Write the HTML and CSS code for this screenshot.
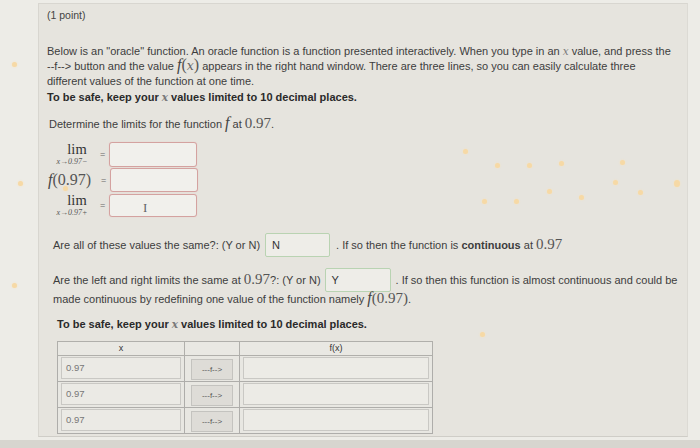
FILE: index.html
```html
<!DOCTYPE html>
<html>
<head>
<meta charset="utf-8">
<link rel="stylesheet" href="styles.css">
</head>
<body>
<div class="page">
  <div class="panel">
    <div class="points">(1 point)</div>
    <p class="intro">Below is an "oracle" function. An oracle function is a function presented interactively. When you type in an <span class="mv">x</span> value, and press the<br>--f--&gt; button and the value <span class="mf">f</span><span class="mp">(</span><span class="mv2">x</span><span class="mp">)</span> appears in the right hand window. There are three lines, so you can easily calculate three<br>different values of the function at one time.<br><b>To be safe, keep your <span class="mv">x</span> values limited to 10 decimal places.</b></p>
    <p class="det">Determine the limits for the function <span class="mf">f</span> at <span class="mn">0.97</span>.</p>
    <div class="lims">
      <div class="limrow">
        <div class="limlbl"><span class="lim">lim</span><span class="sub">x→0.97−</span></div>
        <span class="eq">=</span>
        <div class="ans"></div>
      </div>
      <div class="limrow mid">
        <div class="flbl"><span class="mf">f</span><span class="mn">(0.97)</span></div>
        <span class="eq">=</span>
        <div class="ans a2"></div>
      </div>
      <div class="limrow">
        <div class="limlbl"><span class="lim">lim</span><span class="sub">x→0.97+</span></div>
        <span class="eq">=</span>
        <div class="ans a3"><span class="cursor">I</span></div>
      </div>
    </div>
    <div class="q1"><span>Are all of these values the same?: (Y or N)</span><span class="yn">N</span><span class="after">. If so then the function is <b>continuous</b> at <span class="mn">0.97</span></span></div>
    <div class="q2"><div class="q2line"><span>Are the left and right limits the same at <span class="mn">0.97</span>?: (Y or N)</span><span class="yn yn2">Y</span><span class="after2">. If so then this function is almost continuous and could be</span></div><div class="q2b">made continuous by redefining one value of the function namely <span class="mf">f</span><span class="mn">(0.97)</span>.</div></div>
    <p class="safe"><b>To be safe, keep your <span class="mv">x</span> values limited to 10 decimal places.</b></p>
    <table class="oracle">
      <tr class="hd"><th class="c1">x</th><th class="c2"></th><th class="c3">f(x)</th></tr>
      <tr><td><div class="xin">0.97</div></td><td><div class="btn">---f--&gt;</div></td><td><div class="fout"></div></td></tr>
      <tr><td><div class="xin">0.97</div></td><td><div class="btn">---f--&gt;</div></td><td><div class="fout"></div></td></tr>
      <tr><td><div class="xin">0.97</div></td><td><div class="btn">---f--&gt;</div></td><td><div class="fout"></div></td></tr>
    </table>
    <span class="dot" style="left:-27px;top:58px"></span>
    <span class="dot" style="left:-21px;top:177px"></span>
    <span class="dot" style="left:-27px;top:279px"></span>
    <span class="dot" style="left:24px;top:182px"></span>
    <span class="dot" style="left:424px;top:145px"></span>
    <span class="dot" style="left:456px;top:159px"></span>
    <span class="dot" style="left:488px;top:159px"></span>
    <span class="dot" style="left:520px;top:157px"></span>
    <span class="dot" style="left:581px;top:156px"></span>
    <span class="dot" style="left:443px;top:195px"></span>
    <span class="dot" style="left:475px;top:195px"></span>
    <span class="dot" style="left:508px;top:185px"></span>
    <span class="dot" style="left:540px;top:191px"></span>
    <span class="dot" style="left:574px;top:176px"></span>
    <span class="dot" style="left:599px;top:186px"></span>
    <span class="dot big" style="left:635px;top:176px"></span>
    <span class="dot" style="left:441px;top:328px"></span>
  </div>
</div>
</body>
</html>
```
FILE: styles.css
```css
html, body {
  margin: 0;
  padding: 0;
}
body {
  width: 700px;
  height: 448px;
  overflow: hidden;
  background: #d7d5cf;
  font-family: "Liberation Sans", Arial, sans-serif;
  color: #3d3d3d;
  font-size: 11px;
}
.page {
  height: 440px;
  background: #edece7;
  padding-top: 3px;
  box-sizing: border-box;
}
.panel {
  position: relative;
  margin-left: 38px;
  width: 650px;
  height: 434px;
  box-sizing: border-box;
  background: #e6e4de;
  border-left: 1px solid #d8d6d0;
  border-top: 1px solid #d8d6d0;
  border-bottom: 1px solid #cfcdc7;
  border-right: 1px solid #dcdad4;
  padding: 0 0 0 8px;
}
.points {
  padding-top: 4px;
  line-height: 14px;
  font-size: 10.5px;
  color: #444;
}
p { margin: 0; }
.intro {
  margin-top: 22px;
  line-height: 15.2px;
  white-space: nowrap;
}
.intro .mf, .intro .mp, .intro .mv2, .intro .mv { line-height: 0; }
.intro b, .safe b { color: #2a2a2a; }
.mv {
  font-family: "DejaVu Serif", serif;
  font-style: italic;
  font-size: 10.5px;
  color: #7a7a7a;
  line-height: 1;
}
.mf {
  font-family: "Liberation Serif", serif;
  font-style: italic;
  font-size: 16px;
  color: #444;
  line-height: 1;
}
.mp {
  font-family: "Liberation Serif", serif;
  font-size: 16px;
  color: #555;
  line-height: 1;
}
.mv2 {
  font-family: "DejaVu Serif", serif;
  font-style: italic;
  font-size: 12.5px;
  color: #666;
  line-height: 1;
}
.mn {
  font-family: "Liberation Serif", serif;
  font-size: 15px;
  color: #555;
  line-height: 1;
}
.det {
  margin-top: 10px;
  margin-left: 2px;
  line-height: 16px;
}
.lims {
  margin-top: 10px;
  margin-left: 0;
  display: flex;
  flex-direction: column;
  gap: 1px;
}
.limrow {
  display: flex;
  align-items: center;
  height: 25px;
}
.limrow.mid { height: 24px; }
.limlbl {
  width: 52px;
  display: flex;
  flex-direction: column;
  align-items: center;
}
.lim {
  font-family: "Liberation Serif", serif;
  font-size: 14.5px;
  color: #333;
  line-height: 16px;
  margin-left: 8px;
}
.sub {
  font-family: "Liberation Serif", serif;
  font-style: italic;
  font-size: 8px;
  color: #555;
  line-height: 10px;
  margin-left: -2px;
}
.flbl {
  width: 52px;
  display: flex;
  align-items: baseline;
  margin-left: 1px;
}
.flbl .mn { font-size: 16px; }
.eq {
  font-size: 9px;
  color: #666;
  width: 9px;
  margin-left: 1px;
}
.ans {
  width: 86px;
  height: 23px;
  border: 1px solid #d4a2a0;
  border-radius: 3px;
  background: #f1f0ec;
  box-shadow: 0 0 1px #e4bcba;
  position: relative;
}
.a2 { height: 22px; }
.a3 { height: 21px; }
.cursor {
  position: absolute;
  left: 33px;
  top: 6px;
  font-family: "Liberation Serif", serif;
  font-size: 13px;
  color: #666;
  line-height: 13px;
}
.q1 {
  margin-top: 15px;
  margin-left: 6px;
  display: flex;
  align-items: center;
  height: 24px;
  white-space: nowrap;
}
.yn {
  display: inline-block;
  width: 57px;
  height: 22px;
  line-height: 22px;
  border: 1px solid #b9d3b2;
  border-radius: 2px;
  background: #eeede8;
  margin-left: 5px;
  padding-left: 6px;
  color: #333;
}
.after { margin-left: 6px; }
.q2 {
  margin-top: 11px;
  margin-left: 6px;
  white-space: nowrap;
}
.q2line {
  display: flex;
  align-items: center;
  height: 24px;
}
.yn2 {
  margin-left: 4px;
  width: 58px;
}
.after2 { margin-left: 5px; }
.q2b {
  line-height: 18px;
  margin-top: -2px;
}
.safe {
  margin-top: 8px;
  margin-left: 10px;
  line-height: 16px;
}
.oracle {
  margin-top: 9px;
  margin-left: 10px;
  border-collapse: collapse;
  border: 1px solid #a9a8a4;
  width: 376px;
}
.oracle th {
  height: 13px;
  font-weight: normal;
  font-size: 9px;
  color: #333;
  border: 1px solid #b0afab;
  background: #e9e8e3;
  padding: 0;
}
.oracle td {
  border: 1px solid #aeadaa;
  padding: 1px 3px 1px 3px;
  height: 22px;
  background: #e8e7e2;
}
.c1 { width: 126px; }
.c2 { width: 54px; }
.xin {
  height: 20px;
  border: 1px solid #c9c8c4;
  background: #ebeae5;
  line-height: 20px;
  padding-left: 4px;
  color: #777;
  font-size: 9.5px;
}
.btn {
  width: 40px;
  height: 19px;
  margin: 2px auto 0 auto;
  border: 1px solid #c4c3bf;
  background: #dedcd7;
  font-size: 8px;
  line-height: 19px;
  text-align: center;
  color: #555;
}
.fout {
  height: 20px;
  border: 1px solid #c9c8c4;
  background: #ecebe6;
}
.dot {
  position: absolute;
  width: 5px;
  height: 5px;
  border-radius: 50%;
  background: #f6d9a6;
  box-shadow: 0 0 2px #f8e2b8;
}
.dot.big { width: 6px; height: 7px; }
```
